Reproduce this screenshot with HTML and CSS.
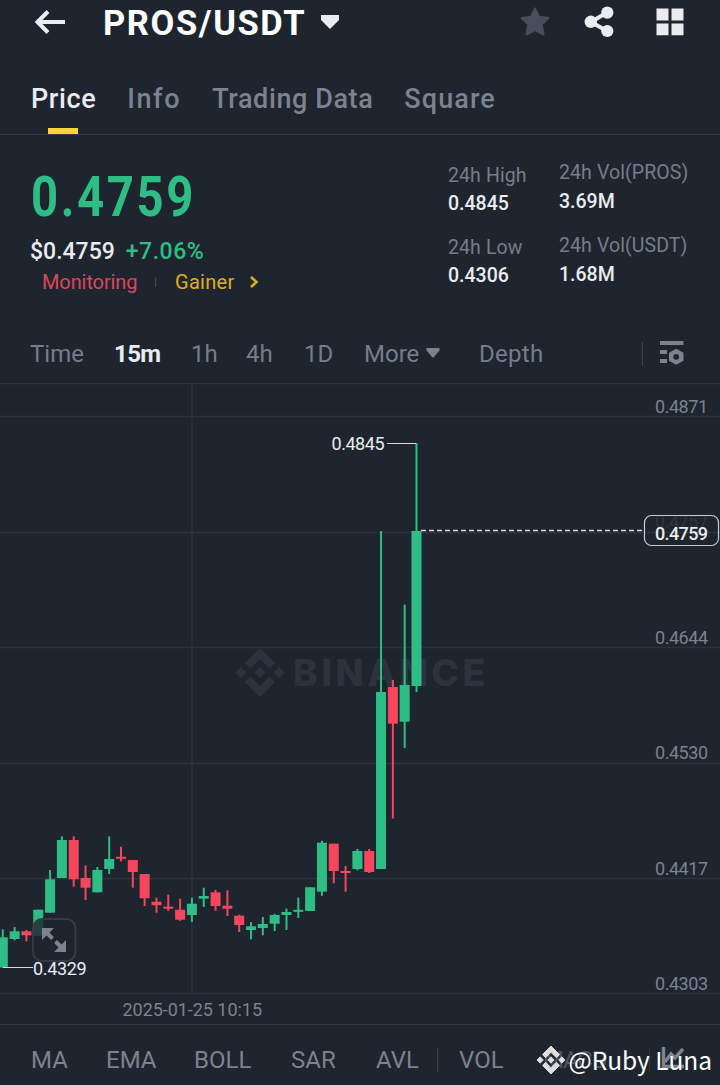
FILE: index.html
```html
<!DOCTYPE html>
<html lang="en">
<head>
    <meta charset="utf-8">
    <title>PROS/USDT</title>
    <link rel="stylesheet" href="styles.css">
</head>
<body>

    <header class="header">
        <svg class="back" width="32" height="26" viewBox="0 0 32 26"><path d="M32 13H5M15 2.5L4.500 13L15 23.5" fill="none" stroke="#eaecef" stroke-width="4"/></svg>
        <h1 class="pair">PROS/USDT</h1>
        <svg class="pair-arrow" width="20" height="15" viewBox="0 0 20 15"><path d="M1 0H19V5L10 14L1 5Z" fill="#eaecef"/></svg>
        <div class="actions">
            <svg width="32" height="32" viewBox="0 0 32 32"><path d="M16 2.5L20 10.7L29.5 12L22.7 18.4L24.5 28.5L16 24L7.5 28.5L9.300 18.4L2.500 12L12 10.7Z" fill="#474f5c" stroke="#474f5c" stroke-width="2" stroke-linejoin="round"/></svg>
            <svg width="30" height="32" viewBox="0 0 30 32"><path d="M7 16L23 6.500M7 16L23 25" stroke="#eaecef" stroke-width="4"/><g fill="#eaecef"><circle cx="6.800" cy="15.800" r="6.200"/><circle cx="23.300" cy="6.600" r="6.100"/><circle cx="23.300" cy="25" r="6.100"/></g></svg>
            <svg width="28" height="28" viewBox="0 0 28 28"><path d="M.5.5H12.500V12.500H.5ZM15.500.5H27.500V12.500H15.500ZM.5 15.500H12.500V27.200H.5ZM15.500 15.500H27.500V27.200H15.500Z" fill="#eaecef"/></svg>
        </div>
    </header>

    <nav class="tabs">
        <a class="tab active">Price</a>
        <a class="tab info">Info</a>
        <a class="tab">Trading Data</a>
        <a class="tab square">Square</a>
    </nav>

    <section class="summary">
        <div class="quote">
            <div class="last-price">0.4759</div>
            <div class="fiat"><span class="usd">$0.4759</span><span class="change">+7.06%</span></div>
            <div class="tags">
                <span class="monitoring">Monitoring</span>
                <i class="tag-line"></i>
                <span class="gainer">Gainer</span>
                <svg width="10" height="14" viewBox="0 0 10 14"><path d="M2 2L7.500 7L2 12" fill="none" stroke="#e0ae1c" stroke-width="2.600"/></svg>
            </div>
        </div>
        <div class="stats">
            <div class="label">24h High</div>
            <div class="value">0.4845</div>
            <div class="label next">24h Low</div>
            <div class="value">0.4306</div>
        </div>
        <div class="stats volume">
            <div class="label">24h Vol(PROS)</div>
            <div class="value">3.69M</div>
            <div class="label next">24h Vol(USDT)</div>
            <div class="value">1.68M</div>
        </div>
    </section>

    <nav class="intervals">
        <span>Time</span>
        <span class="selected">15m</span>
        <span>1h</span>
        <span>4h</span>
        <span>1D</span>
        <span class="more">More<svg width="14" height="11" viewBox="0 0 14 11"><path d="M.5 0H13.500V2.500L7 10L.5 2.500Z" fill="#7b8290"/></svg></span>
        <span class="depth">Depth</span>
        <i class="split"></i>
        <svg width="26" height="26" viewBox="0 0 26 26"><g fill="#7b8290"><path d="M1 0H24.500V4H1ZM1 9H8V13H1ZM1 18H8V22H1Z"/><path fill-rule="evenodd" d="M17.200 7.800L24.500 11.800V19.800L17.200 23.800L10 19.800V11.800ZM17.200 12.900A2.900 2.900 0 1 0 17.200 18.700A2.900 2.900 0 1 0 17.200 12.900Z"/></g></svg>
    </nav>

    <main class="chart">
        <svg width="720" height="641" viewBox="0 383 720 641">
            <path class="grid" d="M0 383.500H720M0 416.500H720M0 532.500H720M0 647.500H720M0 763.500H720M0 878.500H720M0 993.500H720M192 383V992"/>

            <g class="watermark">
                <path transform="translate(235.500 648) scale(2.040)" d="M16.624 13.920l2.718 2.716-7.353 7.353-7.353-7.352 2.718-2.717 4.635 4.660 4.636-4.660zm4.637-4.636L24 12l-2.715 2.716L18.568 12l2.693-2.716zm-9.272 0l2.716 2.692-2.716 2.717L9.272 12l2.717-2.716zm-9.273 0L5.409 12l-2.692 2.692L0 12l2.716-2.716zM11.989.011l7.353 7.329-2.718 2.716-4.635-4.636-4.636 4.660-2.717-2.716z"/>
                <text x="293" y="686" textLength="192">BINANCE</text>
            </g>

            <g class="axis">
                <text x="655" y="413" textLength="53">0.4871</text>
                <text x="655" y="528" textLength="53" class="covered">0.4757</text>
                <text x="655" y="644" textLength="53">0.4644</text>
                <text x="655" y="759" textLength="53">0.4530</text>
                <text x="655" y="875" textLength="53">0.4417</text>
                <text x="655" y="990" textLength="53">0.4303</text>
                <text x="122.500" y="1016" textLength="139.500">2025-01-25 10:15</text>
            </g>

            <g id="candles"></g>

            <path d="M387 443.500H416M3 967.500H33" stroke="#d5d8dd" stroke-width="1.200"/>
            <g class="marks">
                <text x="331.500" y="450" textLength="53">0.4845</text>
                <text x="33" y="975" textLength="53.500">0.4329</text>
            </g>

            <path d="M421 530.500H644" stroke="#d5d8dd" stroke-width="1.300" stroke-dasharray="5 3"/>
            <rect x="644.500" y="515.500" width="74" height="30" rx="7" fill="none" stroke="#c6cad1" stroke-width="1.200"/>
            <text class="current" x="655" y="540" textLength="53">0.4759</text>

            <g>
                <rect x="33" y="919" width="42.500" height="42" rx="9" fill="#202630" fill-opacity=".82" stroke="#343b47" stroke-width="2"/>
                <path d="M42 928H54L42 940ZM66 952H54L66 940Z" fill="#7b8290"/>
                <path d="M46 932L52.500 938.500M62 948L55.500 941.500" stroke="#7b8290" stroke-width="4"/>
            </g>
        </svg>
    </main>

    <footer class="indicators">
        <span>MA</span>
        <span>EMA</span>
        <span>BOLL</span>
        <span>SAR</span>
        <span>AVL</span>
        <i class="split"></i>
        <span>VOL</span>
        <span class="macd">MACD</span>
        <i class="split faint"></i>
        <svg class="lines" width="24" height="24" viewBox="0 0 24 24"><path d="M2.500 1V20.500H23M4 16L10 8L14 12L22 3" fill="none" stroke="#7b8290" stroke-width="3.500"/></svg>
        <div class="author">
            <svg width="28" height="28" viewBox="0 0 24 24"><path fill="#dedede" stroke="#dedede" stroke-width=".8" d="M16.624 13.920l2.718 2.716-7.353 7.353-7.353-7.352 2.718-2.717 4.635 4.660 4.636-4.660zm4.637-4.636L24 12l-2.715 2.716L18.568 12l2.693-2.716zm-9.272 0l2.716 2.692-2.716 2.717L9.272 12l2.717-2.716zm-9.273 0L5.409 12l-2.692 2.692L0 12l2.716-2.716zM11.989.011l7.353 7.329-2.718 2.716-4.635-4.636-4.636 4.660-2.717-2.716z"/></svg>
            <span>@Ruby Luna</span>
        </div>
    </footer>

    <script>
        // high, body top, body bottom, low, up
        const candles = [
            [929.3, 937.3, 967.5, 967.5, 1],
            [927, 931.3, 939, 940.3, 1],
            [930, 931.3, 935.3, 941.3, 0],
            [909.7, 909.7, 935.7, 935.7, 1],
            [870, 879.3, 912.7, 912.7, 1],
            [836.3, 840, 878, 878, 1],
            [836.3, 840, 879.3, 886.7, 0],
            [865.3, 878, 887.7, 900, 0],
            [867, 870, 892.3, 892.3, 1],
            [836.3, 859, 869, 874, 1],
            [846.7, 856.8, 858.8, 861.3, 0],
            [860, 860, 872, 887.7, 0],
            [874, 874, 898.3, 906, 0],
            [897.7, 901.7, 905.3, 912.7, 0],
            [894.7, 906.7, 908.7, 910.7, 0],
            [898.7, 909.7, 919.7, 920.7, 0],
            [897.7, 903.7, 915, 922, 1],
            [887.7, 896, 898.7, 907, 1],
            [890, 892.3, 906, 910.7, 0],
            [890.3, 905.7, 908.7, 916, 0],
            [914.7, 915.7, 925, 932, 0],
            [922, 926.3, 930, 939.3, 1],
            [917, 924, 928, 935.3, 1],
            [914, 915, 923.7, 931, 1],
            [908.7, 912, 915, 930, 1],
            [897.7, 909.8, 911.8, 918, 1],
            [887.3, 887.3, 911, 911, 1],
            [840.7, 842.7, 891.7, 895.7, 1],
            [843.7, 843.7, 871, 883.3, 0],
            [866, 871, 873, 891.7, 0],
            [849, 851, 869, 870.3, 1],
            [849, 851, 872, 873, 0],
            [531, 692, 869, 869, 1],
            [680, 687, 723.7, 818.5, 0],
            [604.7, 685, 721.7, 748, 1],
            [443, 531, 686, 692, 1]
        ];

        let out = '';
        candles.forEach(([high, top, bottom, low, up], i) => {
            const x = 2.8 + i * 11.82;
            out += `<g class="${up ? 'up' : 'down'}">
                <rect x="${x - 1}" y="${high}" width="2" height="${low - high}"/>
                <rect x="${x - 5}" y="${top}" width="10" height="${bottom - top}"/>
            </g>`;
        });
        document.getElementById('candles').innerHTML = out;
    </script>

</body>
</html>
```
FILE: styles.css
```css
* {
    box-sizing: border-box;
}

body {
    margin: 0;
    width: 720px;
    height: 1085px;
    overflow: hidden;
    background: #1f252f;
    color: #eaecef;
    font-family: Roboto, sans-serif;
    white-space: nowrap;
}

svg {
    display: block;
    flex: none;
}

.header {
    display: flex;
    align-items: center;
    height: 47px;
    padding: 0 36px 0 33px;
}

.back {
    margin-top: -3px;
}

.pair {
    margin: 0 0 0 38px;
    width: 202px;
    font-size: 34.5px;
    line-height: 49px;
    font-weight: 700;
    letter-spacing: 1.6px;
    color: #fff;
}

.pair-arrow {
    margin: -3px 0 0 15px;
}

.actions {
    display: flex;
    align-items: center;
    margin: -3px 0 0 auto;
}

.actions svg + svg {
    margin-left: 33px;
}

.actions svg:last-child {
    margin-left: 42px;
}

.tabs {
    display: flex;
    gap: 31px;
    height: 88px;
    padding: 26px 31px 0;
    border-bottom: 1px solid #343b46;
    font-size: 27px;
    line-height: 52px;
    font-weight: 500;
    letter-spacing: 0.6px;
    color: #7b8290;
}

.tab.info {
    letter-spacing: 1.6px;
}

.tab.square {
    letter-spacing: 1.1px;
}

.tab.active {
    color: #eaecef;
}

.tab.active::after {
    content: "";
    display: block;
    width: 30px;
    height: 6px;
    margin: 3px 0 0 17px;
    background: #fcd535;
}

.summary {
    display: grid;
    grid-template-columns: 417px 111px 1fr;
    height: 190px;
    padding-left: 31px;
}

.quote {
    padding-top: 32px;
}

/* narrow DIN-like digits */
.last-price {
    font-size: 55px;
    line-height: 60px;
    font-weight: 700;
    letter-spacing: 3px;
    transform: scaleX(0.86);
    transform-origin: left;
    color: #2ebd85;
}

.fiat {
    display: flex;
    gap: 11px;
    margin: 10px 0 0 -1px;
    font-size: 23px;
    line-height: 30px;
    font-weight: 500;
}

.change {
    letter-spacing: 0.5px;
    color: #2ebd85;
}

.tags {
    display: flex;
    align-items: center;
    margin-top: 1px;
    padding-left: 11px;
    font-size: 20px;
    line-height: 28px;
}

.monitoring {
    width: 113px;
    letter-spacing: -0.1px;
    color: #d9475d;
}

.tag-line {
    width: 1px;
    height: 9px;
    margin-right: 19px;
    background: #454c58;
}

.gainer {
    width: 74px;
    letter-spacing: 0.3px;
    color: #e0ae1c;
}

.stats {
    padding-top: 27px;
    font-size: 19.5px;
    line-height: 28px;
}

.stats.volume {
    padding-top: 24px;
}

.volume .label.next {
    margin-top: 17px;
}

.volume .label + .value {
    position: relative;
    top: 1px;
}

.label {
    letter-spacing: 0.1px;
    color: #767d8a;
}

.label.next {
    margin-top: 16px;
}

.value {
    font-weight: 500;
}

.intervals {
    display: grid;
    grid-template-columns: 84px 77px 55px 58px 60px 115px 163px 17px 26px;
    align-items: center;
    height: 58px;
    padding-left: 30px;
    font-size: 24px;
    color: #767d8a;
}

.intervals .selected {
    color: #eaecef;
    font-weight: 700;
    letter-spacing: -0.6px;
}

.more {
    display: flex;
    align-items: center;
    gap: 7px;
}

.more svg {
    margin-top: -2px;
}

.depth {
    letter-spacing: 0.3px;
}

.split {
    width: 1px;
    height: 24px;
    background: #3a414d;
}

.chart {
    height: 641px;
}

.grid {
    fill: none;
    stroke: #2c333e;
    stroke-width: 1.5;
}

.watermark {
    fill: #2d333e;
}

.watermark text {
    font: 800 37px Inter, sans-serif;
}

.axis {
    font-size: 18px;
    fill: #7b8290;
}

.axis .covered {
    fill: #303640;
}

.marks {
    font-size: 18px;
    fill: #eaecef;
}

.current {
    font-size: 18px;
    font-weight: 500;
    fill: #eaecef;
}

.up {
    fill: #2ebd85;
}

.down {
    fill: #f6465d;
}

.indicators {
    position: relative;
    display: grid;
    grid-template-columns: 75px 88px 97px 85px 61px 22px 84px 106px 12px 24px;
    align-items: center;
    height: 61px;
    padding: 9px 0 0 31px;
    border-top: 1px solid #343b46;
    font-size: 24px;
    color: #7b8290;
}

.macd {
    letter-spacing: -1.2px;
    opacity: 0.5;
}

.faint {
    opacity: 0.5;
}

.lines {
    margin-top: -4px;
}

/* floats over the indicator row */
.author {
    position: absolute;
    right: 8px;
    top: 17px;
    display: flex;
    align-items: center;
    gap: 3px;
    font: 400 24.5px/36px "Noto Sans CJK SC", "Noto Sans", sans-serif;
    color: #fff;
}
```
